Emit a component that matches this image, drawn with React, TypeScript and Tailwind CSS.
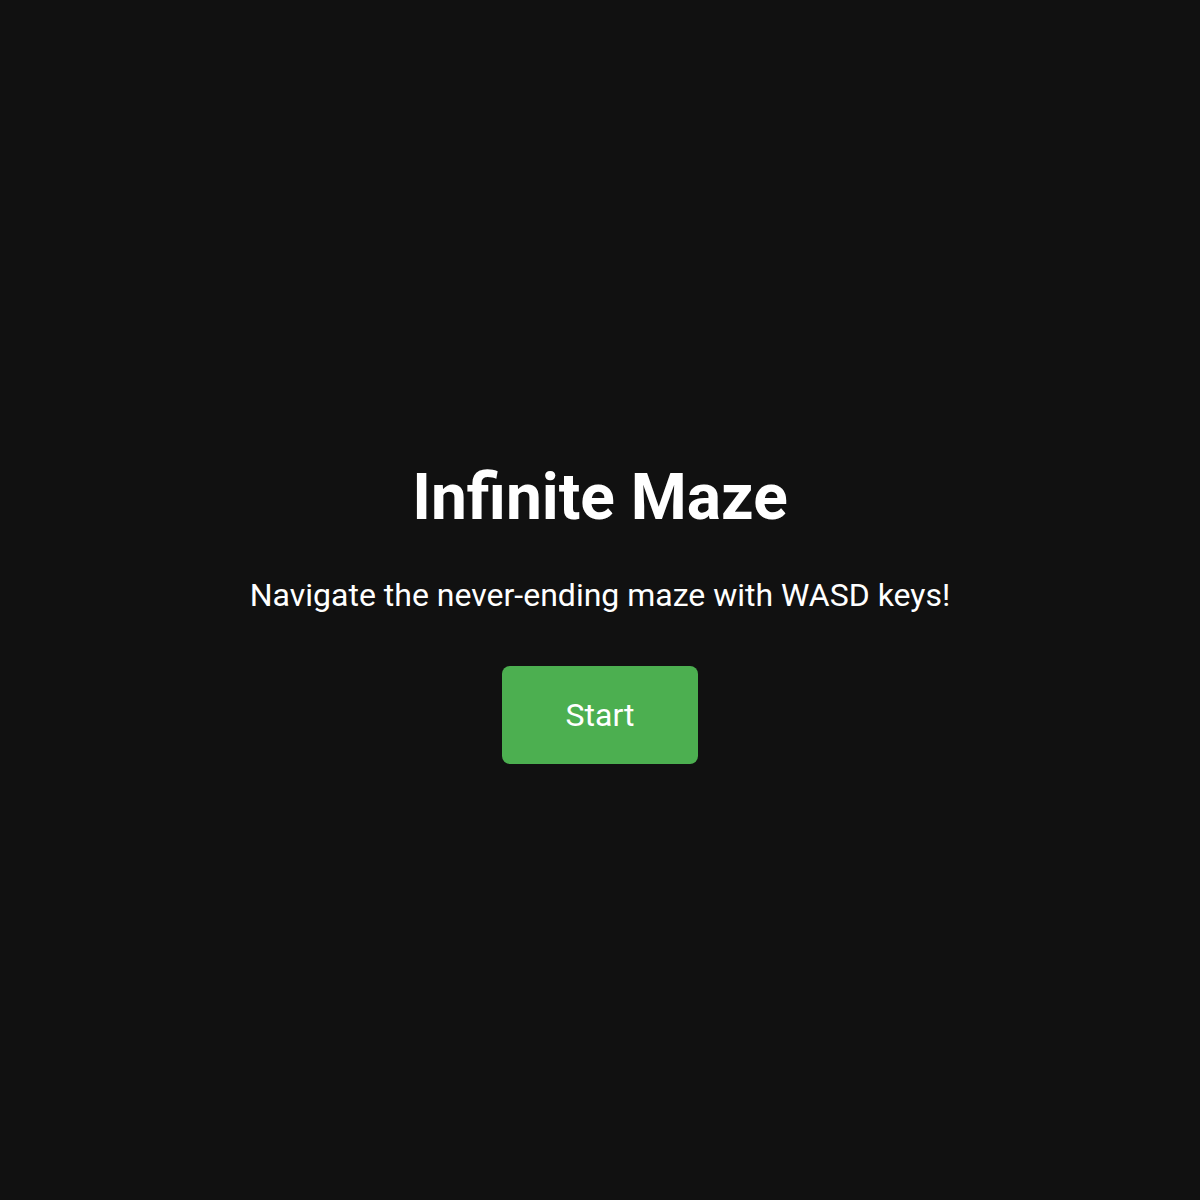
import React from 'react';

const App = () => {
  return (
    <div className="min-h-screen w-full bg-[#111111] flex flex-col items-center justify-center pt-[24px] text-white font-['Roboto',sans-serif]">
      <h1 className="text-[64px] font-bold leading-[1.2] m-0">Infinite Maze</h1>
      <p className="text-[32px] leading-[1.2] mt-[39px]">Navigate the never-ending maze with WASD keys!</p>
      <button className="mt-[51px] w-[196px] h-[98px] bg-[#4caf50] rounded-lg text-[32px] text-white">
        Start
      </button>
    </div>
  );
};

export default App;
